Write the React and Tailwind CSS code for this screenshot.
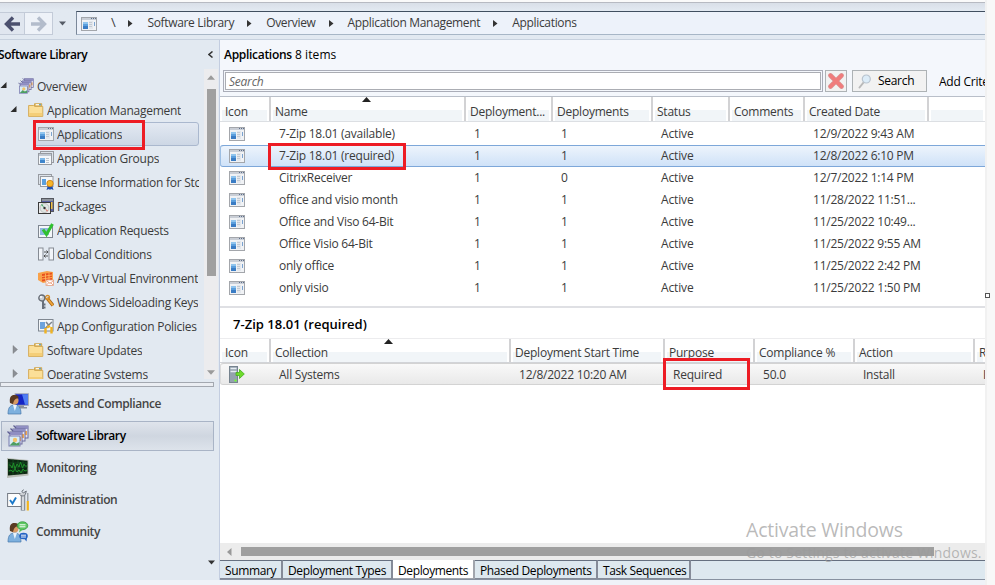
import React, { useState } from 'react';
import clsx from 'clsx';

// Window with the small content preview, used for every application entry
const AppIcon = ({ className }) => (
    <svg className={className} width="16" height="14" viewBox="0 0 16 14" shapeRendering="crispEdges">
        <rect x="0" y="0" width="16" height="14" fill="#a3a6ab" />
        <rect x="1" y="1" width="14" height="2" fill="#c9ced6" />
        <rect x="1" y="3" width="14" height="10" fill="#f0f2f5" />
        <rect x="10" y="1" width="1" height="1" fill="#5d6f8c" />
        <rect x="12" y="1" width="1" height="1" fill="#5d6f8c" />
        <rect x="14" y="1" width="1" height="1" fill="#5d6f8c" />
        <rect x="2" y="5" width="5" height="2" fill="#8fc4ee" />
        <rect x="2" y="7" width="5" height="2" fill="#5b9fdd" />
        <rect x="2" y="9" width="5" height="3" fill="#3a7cc4" />
        <rect x="8" y="4" width="4" height="8" fill="#e3e7ec" />
        <rect x="8" y="5" width="3" height="1" fill="#c3cad3" />
        <rect x="8" y="7" width="3" height="1" fill="#c3cad3" />
        <rect x="8" y="9" width="3" height="1" fill="#c3cad3" />
        <rect x="13" y="5" width="1" height="4" fill="#7ba3d0" />
    </svg>
);

const StackIcon = ({ size }) => (
    <svg width={size} height={size} viewBox="0 0 22 22">
        {[[9, 1], [6, 4], [3, 7]].map(([x, y]) => (
            <g key={x}>
                <rect x={x} y={y} width="12" height="12" fill="#e3e3f3" stroke="#6a6a9c" />
                <rect x={x} y={y} width="12" height="3" fill="#8f8ec2" />
                <path d={`M${x - 2.5} ${y - 0.5}l2.5 2.5`} stroke="#5d5d92" strokeWidth="1.2" />
                <rect x={x + 8} y={y + 5} width="3" height="4" fill="#f0a850" />
            </g>
        ))}
        <rect x="2" y="11" width="11" height="10" fill="#d7ecf7" stroke="#7a7ab0" />
        <path d="M2.5 20.5l4-4 3 2 3-1.5v3.5z" fill="#4d9e62" />
        <circle cx="8" cy="15" r="2.2" fill="#f2c36a" />
    </svg>
);

const FolderIcon = () => (
    <svg width="16" height="14" viewBox="0 0 16 14">
        <path d="M6.500 3V.7h7.200V3z" fill="#f3cf7c" stroke="#c59a3c" strokeWidth=".8" />
        <rect x="8" y="1.200" width="3" height="1" fill="#fff" />
        <rect x="11" y="1.200" width="2" height="1" fill="#3d9be0" />
        <path d="M.6 2.500h5l1 1h8.200v9.900H.6z" fill="#fbdf98" stroke="#d3a750" strokeWidth=".9" />
        <path d="M1.200 10h13v3h-13z" fill="#f4ce78" />
    </svg>
);

const GroupIcon = () => (
    <svg width="16" height="14" viewBox="0 0 16 14">
        <rect x="2.5" y=".5" width="13" height="11" fill="#dde3ea" stroke="#979ba1" />
        <rect x=".5" y="2.5" width="13" height="11" fill="#f4f7fa" stroke="#979ba1" />
        <rect x="1" y="3" width="12" height="2" fill="#c0c8d2" />
        <rect x="2" y="7" width="5" height="2" fill="#7db8ea" />
        <rect x="2" y="9" width="5" height="3" fill="#3f86cc" />
        <path d="M8 7.500h3M8 9.500h3M8 11.500h3" stroke="#bcc4ce" />
    </svg>
);

const LicenseIcon = () => (
    <svg width="16" height="16" viewBox="0 0 16 16">
        <rect x=".5" y=".5" width="13" height="10" fill="#dde3ea" stroke="#979ba1" />
        <rect x="2.500" y="2.500" width="12.500" height="10" fill="#f4f7fa" stroke="#979ba1" />
        <rect x="4" y="5" width="4" height="6" fill="#5b9fdd" />
        <path d="M10 11l-1.500 5 2.500-1 1 1 1-1 2.500 1-1.500-5z" fill="#1d4fb0" />
        <circle cx="12" cy="9.500" r="3.200" fill="#f6b52a" stroke="#c97b12" strokeWidth=".8" />
    </svg>
);

const PackageIcon = () => (
    <svg width="16" height="16" viewBox="0 0 16 16">
        <rect x="3.500" y=".5" width="12" height="13" fill="#5b62a5" stroke="#55585f" />
        <rect x="4" y="1" width="11" height="2" fill="#8f949c" />
        <rect x="13" y="4" width="1.500" height="7" fill="#f0c040" />
        <rect x="0" y="4" width="13" height="12" fill="#3a3a3a" />
        <rect x="1" y="5" width="11" height="10" fill="#ececec" />
        <circle cx="6.500" cy="10" r="4.500" fill="#dfe6e4" stroke="#999" strokeWidth=".5" />
        <path d="M6.500 10L3 7l1-1.300z" fill="#4caf6a" />
        <path d="M6.500 10l3.500 2.500-1 1.200z" fill="#e27b6c" />
        <circle cx="6.500" cy="10" r="1.200" fill="#333" />
    </svg>
);

const RequestIcon = () => (
    <svg width="16" height="15" viewBox="0 0 16 15">
        <rect x=".5" y="2.500" width="14" height="12" fill="#f4f7fa" stroke="#7f8791" />
        <rect x="2" y="5" width="9" height="7" fill="#8fb8de" />
        <path d="M5 6.500l3.500 5L14.500 1" fill="none" stroke="#2fc02f" strokeWidth="3" />
    </svg>
);

const ConditionIcon = () => (
    <svg width="16" height="14" viewBox="0 0 16 14">
        <rect x=".5" y="1" width="4.500" height="12" fill="#f2f5f9" stroke="#858b94" />
        <rect x="11" y="1" width="4.500" height="12" fill="#f2f5f9" stroke="#858b94" />
        <path d="M6 5h4M8.500 3.500L10 5 8.500 6.500M10 9H6M7.500 7.500L6 9l1.500 1.500" fill="none" stroke="#444" strokeWidth=".9" />
    </svg>
);

const AppVIcon = () => (
    <svg width="16" height="16" viewBox="0 0 16 16">
        <path d="M0 3l9-2 6 1v9l-10 2-5-3z" fill="#f9a24a" />
        <path d="M4 4l10-1.500V10L4 11.500z" fill="#e8501f" />
        <path d="M4 6.500L14 5M4 9l10-1.500M7.500 3.500V11M11 3v7.500" stroke="#ffb45c" strokeWidth=".9" />
        <rect x="8" y="10" width="7.500" height="5.500" fill="#fff" stroke="#e3a184" strokeWidth=".8" />
        <path d="M8.500 10.500l3.500 3 3.500-3M8.500 15l2.500-2.500M15 15l-2.500-2.500" fill="none" stroke="#e78257" strokeWidth=".7" />
    </svg>
);

const KeysIcon = () => (
    <svg width="16" height="16" viewBox="0 0 16 16">
        <path d="M9 4l6 7.500" stroke="#a35f12" strokeWidth="3.400" />
        <path d="M9 4l6 7.500" stroke="#f0a63a" strokeWidth="2" />
        <circle cx="9.500" cy="3.500" r="2" fill="none" stroke="#d58b25" strokeWidth="1.300" />
        <circle cx="3.800" cy="4" r="3" fill="#c9cfd6" stroke="#666c75" strokeWidth="1.300" />
        <circle cx="3" cy="3" r="1" fill="#fff" />
        <path d="M5 7v8M5.500 10.500h2M5.500 13.500h2" stroke="#69717c" strokeWidth="2" />
    </svg>
);

const PolicyIcon = () => (
    <svg width="16" height="16" viewBox="0 0 16 16">
        <rect x=".5" y="1.500" width="14.500" height="11.500" fill="#f4f7fa" stroke="#7f8791" />
        <rect x="2" y="4" width="5" height="7" fill="#6ea3dc" />
        <path d="M8 4l3 3.500M14 4l-6.500 6" stroke="#7d858f" strokeWidth="1.600" />
        <path d="M7.500 10v5.500M13.500 9v6.500M9 9.500l3-1.500" stroke="#f0b323" strokeWidth="2.400" />
    </svg>
);

const PersonShape = () => (
    <g>
        <path d="M1 21c0-7 2.500-9 6.500-9s6.500 2 6.500 9z" fill="#7db0de" stroke="#4779aa" strokeWidth=".7" />
        <path d="M6 12l1.800 6L10 12z" fill="#e9f3fc" />
        <circle cx="7.500" cy="7.500" r="4" fill="#d79a63" />
        <path d="M3 10c-1-7 2-8.500 5-8 2.500 0 4 1.500 3.500 3.500C9 5 7 6 6 11z" fill="#5a3a22" />
    </g>
);

const AssetsIcon = () => (
    <svg width="22" height="22" viewBox="0 0 22 22">
        <rect x="8" y=".8" width="13.500" height="11.500" fill="#1424c4" stroke="#a9adb5" />
        <path d="M15 1.300h6v10.500h-3z" fill="#4f7df2" />
        <path d="M12 12.500h5V14h3v1.500h-8z" fill="#8c929b" />
        <PersonShape />
    </svg>
);

const MonitoringIcon = () => (
    <svg width="22" height="20" viewBox="0 0 22 20">
        <path d="M0 0L21.500 2v15.500L0 20z" fill="#b9bdb6" />
        <path d="M1 1l19.500 1.800v13L1 17.500z" fill="#0c2611" />
        <path d="M1 5h19.500M1 9h19.500M1 13h19.500M6 1.500v15.500M11 2v14.500M16 2.500v13.500" stroke="#1b5a25" strokeWidth=".7" />
        <path d="M1.500 7h2l1.500 3 1.500-5 1.500 6L10 6l2 3 1.500-5 2 6 1.500-4 1 2h2M2 13l2-1 2 2 2-3 2 3 2-2 2 3 2-4 2 2 2-1" fill="none" stroke="#1f8f2a" strokeWidth="1" />
    </svg>
);

const AdminIcon = () => (
    <svg width="22" height="22" viewBox="0 0 22 22">
        <rect x=".6" y="4.500" width="14" height="13" fill="#fdfdfd" stroke="#747b85" />
        <path d="M3 11l2.500 3.500L9 8.500" fill="none" stroke="#1a78c9" strokeWidth="1.900" />
        <path d="M16 6v15.500" stroke="#6d747d" strokeWidth="4.400" />
        <path d="M16 6v15" stroke="#d6dade" strokeWidth="2.600" />
        <path d="M12.500 5.500c2 2 5 2 6-.5l.8-3-3 2-1.500-1.800 2-1.500" fill="#cfd3d8" stroke="#6d747d" />
        <path d="M20.800 4v8" stroke="#8c9199" strokeWidth="1.200" />
        <path d="M20.800 12v9.500" stroke="#f3b51d" strokeWidth="2.200" />
    </svg>
);

const CommunityIcon = () => (
    <svg width="22" height="22" viewBox="0 0 22 22">
        <PersonShape />
        <ellipse cx="15.500" cy="4.700" rx="5.300" ry="4" fill="#5cc762" stroke="#31913a" strokeWidth=".7" />
        <path d="M12.500 3.800h6M12.500 5.800h6" stroke="#fff" />
        <path d="M13 8l-1 3.500L16 8.500z" fill="#4fbf55" />
        <ellipse cx="16.500" cy="15" rx="4.300" ry="3.300" fill="#2563c4" />
        <path d="M14 14.200h5M14 16h5" stroke="#fff" strokeWidth=".9" />
        <path d="M17 17.500l2.500 3 .5-4z" fill="#2563c4" />
    </svg>
);

const ServerIcon = () => (
    <svg width="16" height="17" viewBox="0 0 16 17">
        <rect x=".5" y=".5" width="8" height="16" fill="#94a2ae" stroke="#76838e" />
        <path d="M1.500 2.500h6M1.500 5.500h6" stroke="#e6edf2" strokeWidth="1.300" />
        <rect x="5.500" y="13.500" width="2" height="2" fill="#6fff2a" />
        <path d="M7 6.500h3.500V3.500L15.300 8l-4.800 4.500v-3H7z" fill="#6edb2b" stroke="#43ad20" strokeWidth=".8" />
    </svg>
);

const Caret = ({ open }) => (
    <svg width="8" height="10" viewBox="0 0 8 10">
        {open ? <path d="M6.500 1v6h-6z" fill="#2b2b2b" /> : <path d="M3 .5l4.500 4-4.500 4z" fill="#8b8f96" stroke="#777" strokeWidth=".4" />}
    </svg>
);

const Triangle = ({ dir, className }) => (
    <svg className={className} width="9" height="5" viewBox="0 0 9 5">
        <path d={dir === 'up' ? 'M4.500 0L9 5H0z' : 'M0 0h9L4.500 5z'} fill="currentColor" />
    </svg>
);

const treeItems = [
    { label: 'Overview', icon: <StackIcon size={16} />, pad: 'pl-0', open: true },
    { label: 'Application Management', icon: <FolderIcon />, pad: 'pl-[10px]', open: true },
    { label: 'Applications', icon: <AppIcon />, pad: 'pl-5' },
    { label: 'Application Groups', icon: <GroupIcon />, pad: 'pl-5' },
    { label: 'License Information for Stc', icon: <LicenseIcon />, pad: 'pl-5' },
    { label: 'Packages', icon: <PackageIcon />, pad: 'pl-5' },
    { label: 'Application Requests', icon: <RequestIcon />, pad: 'pl-5' },
    { label: 'Global Conditions', icon: <ConditionIcon />, pad: 'pl-5' },
    { label: 'App-V Virtual Environment', icon: <AppVIcon />, pad: 'pl-5' },
    { label: 'Windows Sideloading Keys', icon: <KeysIcon />, pad: 'pl-5' },
    { label: 'App Configuration Policies', icon: <PolicyIcon />, pad: 'pl-5' },
    { label: 'Software Updates', icon: <FolderIcon />, pad: 'pl-[10px]', open: false },
    { label: 'Operating Systems', icon: <FolderIcon />, pad: 'pl-[10px]', open: false },
];

const workspaces = [
    { label: 'Assets and Compliance', icon: <AssetsIcon /> },
    { label: 'Software Library', icon: <StackIcon size={22} /> },
    { label: 'Monitoring', icon: <MonitoringIcon /> },
    { label: 'Administration', icon: <AdminIcon /> },
    { label: 'Community', icon: <CommunityIcon /> },
];

const applications = [
    ['7-Zip 18.01 (available)', '1', '1', '12/9/2022 9:43 AM'],
    ['7-Zip 18.01 (required)', '1', '1', '12/8/2022 6:10 PM'],
    ['CitrixReceiver', '1', '0', '12/7/2022 1:14 PM'],
    ['office and visio month', '1', '1', '11/28/2022 11:51...'],
    ['Office and Viso 64-Bit', '1', '1', '11/25/2022 10:49...'],
    ['Office Visio 64-Bit', '1', '1', '11/25/2022 9:55 AM'],
    ['only office', '1', '1', '11/25/2022 2:42 PM'],
    ['only visio', '1', '1', '11/25/2022 1:50 PM'],
];

const appGrid = 'grid grid-cols-[51px_195px_87px_100px_77px_75px_124px_56px]';
const deployGrid = 'grid grid-cols-[51px_240px_154px_90px_100px_120px_10px]';

const tabs = [
    ['Summary', 'w-[63px]'],
    ['Deployment Types', 'w-[110px]'],
    ['Deployments', 'w-[82px]'],
    ['Phased Deployments', 'w-[123px]'],
    ['Task Sequences', 'w-[93px]'],
];

const HeaderCell = ({ label, sorted, last }) => (
    <div className={clsx('relative overflow-hidden pl-1', !last && 'border-r-2 border-[#d2d2d4]')}>
        <div className="absolute inset-x-0.5 top-[13px] bottom-0 bg-[#f1f5f8]" />
        {sorted && <Triangle dir="up" className="absolute top-0 left-1/2 -ml-[6px] text-[#222]" />}
        <span className={clsx('relative whitespace-nowrap', label === 'Icon' && 'pl-px')}>{label}</span>
    </div>
);

const RedBox = ({ className }) => (
    <div className={clsx('pointer-events-none absolute border-3 border-[#ed1c24]', className)} />
);

const App = () => {
    const [workspace, setWorkspace] = useState('Software Library');
    const [selected, setSelected] = useState(1);
    const [tab, setTab] = useState('Deployments');

    return (
        <div className="relative flex h-[585px] w-[995px] overflow-hidden bg-[#f8f8f8] font-['Open_Sans','Noto_Sans',sans-serif] text-[12px] tracking-[-0.23px] text-[#3b3b3b]">
            <div className="flex w-[985px] flex-col bg-[#e2e9f1]">
                {/* Navigation bar */}
                <div className="h-[2px] bg-[#fafafa]" />
                <div className="flex h-[38px] shrink-0 items-start border-t border-b border-t-[#b7bac2] border-b-[#c7d1de] bg-linear-to-b from-[#d9dfe8] to-[#e2e9f1] to-20% pt-2">
                    <div className="mt-px flex h-[23px] w-[53px] border border-l-0 border-[#c3cbd8] bg-[#eef2f8]">
                        <button className="flex w-[25px] items-center justify-center border-r border-[#c3cbd8] bg-[#e0e6ef] pr-2">
                            <svg width="17" height="16" viewBox="0 0 17 16" className="ml-2 shrink-0">
                                <path d="M16 8H3M9 1.500L2.500 8 9 14.500" fill="none" stroke="#4b506e" strokeWidth="3.400" />
                            </svg>
                        </button>
                        <button className="flex flex-1 items-center justify-center">
                            <svg width="17" height="16" viewBox="0 0 17 16">
                                <path d="M1 8h13M8 1.500L14.500 8 8 14.500" fill="none" stroke="#b3bccb" strokeWidth="3.400" />
                            </svg>
                        </button>
                    </div>
                    <Triangle dir="down" className="mt-[10px] ml-[6px] w-[7px] text-[#555b66]" />
                    <div className="ml-[10px] flex h-6 flex-1 items-center border border-r-0 border-t-[#414f60] border-b-[#a7b6c6] border-l-[#7b8899] bg-[#edf2fa] pl-1 tracking-[-0.33px]">
                        <AppIcon className="mt-0.5" />
                        <span className="ml-[14px] text-[13px]">\</span>
                        {['Software Library', 'Overview', 'Application Management', 'Applications'].map((crumb) => (
                            <React.Fragment key={crumb}>
                                <svg width="5" height="7" viewBox="0 0 5 7" className="mr-[14px] ml-[13px] shrink-0">
                                    <path d="M0 0l4.500 3.500L0 7z" fill="#333" />
                                </svg>
                                <span className="whitespace-nowrap">{crumb}</span>
                            </React.Fragment>
                        ))}
                    </div>
                </div>

                <div className="flex min-h-0 flex-1">
                    {/* Left pane */}
                    <div className="flex w-[220px] flex-col border-r border-[#c3cde0]">
                        <div className="flex h-[29px] items-center justify-between pr-[6px] text-black">
                            <span className="-ml-[2px] pt-px font-semibold tracking-[-0.42px]">Software Library</span>
                            <svg width="5" height="7" viewBox="0 0 5 7">
                                <path d="M4.500 .5L1 3.500l3.500 3" fill="none" stroke="#333" strokeWidth="1.500" />
                            </svg>
                        </div>
                        <div className="flex h-[310px] shrink-0">
                            <div className="h-[310px] w-[199px] overflow-hidden pt-[5px] tracking-[-0.27px]">
                                {treeItems.map((item) => (
                                    <div key={item.label} className={clsx('flex h-6 items-center', item.pad)}>
                                        <span className="flex w-[18px] shrink-0">
                                            {item.open !== undefined && <Caret open={item.open} />}
                                        </span>
                                        <div
                                            className={clsx(
                                                'flex h-6 min-w-0 flex-1 items-center rounded-[3px]',
                                                item.label === 'Applications' && 'border border-[#aab8ce] bg-linear-to-b from-[#e3e9f2] to-[#cdd7e5] -ml-[5px] pl-1'
                                            )}
                                        >
                                            <span className="flex w-[19px] shrink-0">{item.icon}</span>
                                            <span className="overflow-hidden pt-[2px] whitespace-nowrap">{item.label}</span>
                                        </div>
                                    </div>
                                ))}
                            </div>
                            <div className="ml-[5px] flex w-[14px] flex-col items-center bg-[#ececee] pt-[6px] pb-[4px] text-[#9b9b9b]">
                                <Triangle dir="up" className="w-[8px]" />
                                <div className="mt-[9px] h-[187px] w-[9px] bg-[#a0a0a0]" />
                                <Triangle dir="down" className="mt-auto w-[8px]" />
                            </div>
                        </div>
                        <div className="mt-[3px] h-[5px] w-[214px] shrink-0 border border-[#a3a8b0] bg-[#eaedf2]" />
                        <div className="mt-px flex flex-col">
                            {workspaces.map(({ label, icon }) => (
                                <button
                                    key={label}
                                    onClick={() => setWorkspace(label)}
                                    className={clsx(
                                        'my-px ml-px flex h-[30px] w-[213px] items-center border pl-[5px] text-left text-[12px] font-semibold tracking-[-0.4px]',
                                        workspace === label
                                            ? 'border-[#a9b4c6] bg-linear-to-b from-[#dfe4ec] via-[#cfd6e0] to-[#dde3eb] text-black'
                                            : 'border-transparent text-[#444]'
                                    )}
                                >
                                    <span className="flex w-[29px] shrink-0">{icon}</span>
                                    <span>{label}</span>
                                </button>
                            ))}
                        </div>
                        <Triangle dir="down" className="mt-[12px] ml-[208px] w-[7px] text-[#333]" />
                    </div>

                    {/* Right pane */}
                    <div className="flex w-[765px] flex-col bg-white">
                        <div className="h-[56px] shrink-0 bg-[#f4f7fc] text-black">
                            <div className="h-[30px] pt-[6px] pl-1 leading-[18px] tracking-[0.08px]">
                                <span className="font-semibold tracking-[-0.3px]">Applications</span> 8 items
                            </div>
                            <div className="flex h-[22px] items-stretch pl-[3px]">
                                <div className="w-[600px] border border-[#aaadb8] bg-[#f4f7fc] p-px">
                                    <div className="flex h-full items-center border border-[#abadb3] bg-white pt-px pl-[3px] text-[#666] italic">Search</div>
                                </div>
                                <button className="ml-[2px] flex w-[22px] items-center justify-center border border-[#adb2b5] bg-[#f2f2f2]">
                                    <svg width="16" height="16" viewBox="0 0 16 16">
                                        <path d="M2.500 2.500l11 11M13.500 2.500l-11 11" stroke="#d99091" strokeWidth="4.600" strokeLinecap="round" />
                                        <path d="M2.500 2.500l11 11M13.500 2.500l-11 11" stroke="#f07c7c" strokeWidth="3.400" strokeLinecap="round" />
                                    </svg>
                                </button>
                                <button className="ml-[5px] flex w-[75px] items-center border border-[#adb2b5] bg-[#f2f2f2] pl-[5px]">
                                    <svg width="14" height="15" viewBox="0 0 14 15">
                                        <path d="M5.500 8.500l-4 5" stroke="#b9b9b9" strokeWidth="2" strokeLinecap="round" />
                                        <circle cx="8.300" cy="5" r="4" fill="#dcecf8" stroke="#b9c4cf" strokeWidth="1.200" />
                                    </svg>
                                    <span className="ml-[6px] tracking-[-0.3px]">Search</span>
                                </button>
                                <span className="ml-3 w-[46px] overflow-hidden whitespace-nowrap leading-[24px]">Add Criteria</span>
                            </div>
                        </div>

                        {/* Application list */}
                        <div className={clsx(appGrid, 'h-[26px] shrink-0 border-t border-b border-t-[#b9bfc9] border-b-[#dcdfe3] leading-[30px]')}>
                            {['Icon', 'Name', 'Deployment...', 'Deployments', 'Status', 'Comments', 'Created Date', ''].map((label, i) => (
                                <HeaderCell key={i} label={label} sorted={label === 'Name'} last={i === 7} />
                            ))}
                        </div>
                        <div className="h-[184px] shrink-0 pt-px">
                            {applications.map(([name, types, deployments, created], i) => (
                                <div
                                    key={name}
                                    onClick={() => setSelected(i)}
                                    className={clsx(
                                        appGrid,
                                        'h-[22px] items-center border-y',
                                        selected === i ? 'rounded-l-[3px] border-[#7da7d9] bg-linear-to-b from-[#edf4fc] to-[#cfe2f8] inset-shadow-[1px_0_0_#9dbfe4]' : 'border-transparent'
                                    )}
                                >
                                    <AppIcon className="ml-[9px]" />
                                    <span className="pl-2">{name}</span>
                                    <span className="pl-2">{types}</span>
                                    <span className="pl-2">{deployments}</span>
                                    <span className="pl-2 tracking-[-0.15px]">Active</span>
                                    <span />
                                    <span className="pl-2 whitespace-nowrap">{created}</span>
                                </div>
                            ))}
                        </div>

                        {/* Detail pane */}
                        <div className="h-[32px] shrink-0 border-t-2 border-[#dfe0e4] pt-[7px] pl-[13px] text-[13px] leading-[18px] font-semibold tracking-[0.02px] text-black">
                            {applications[selected][0]}
                        </div>
                        <div className={clsx(deployGrid, 'h-[25px] shrink-0 border-t border-b border-t-[#ececee] border-b-[#d2d4d8] leading-[28px]')}>
                            {['Icon', 'Collection', 'Deployment Start Time', 'Purpose', 'Compliance %', 'Action', 'R'].map((label, i) => (
                                <HeaderCell key={label} label={label} sorted={label === 'Collection'} last={i === 6} />
                            ))}
                        </div>
                        <div className={clsx(deployGrid, 'h-[22px] shrink-0 items-center rounded-l-[3px] border-y border-[#d3d3d3] bg-linear-to-b from-[#f9f9f9] to-[#e9e9e9] pt-px inset-shadow-[1px_0_0_#dcdcdc]')}>
                            <span className="-mt-px pl-[9px]"><ServerIcon /></span>
                            <span className="pl-2">All Systems</span>
                            <span className="pl-2">12/8/2022 10:20 AM</span>
                            <span className="pl-2">Required</span>
                            <span className="pl-2">50.0</span>
                            <span className="pl-2">Install</span>
                            <span className="overflow-hidden pl-2">I</span>
                        </div>

                        <div className="mt-auto flex h-[17px] shrink-0 items-center bg-[#ececec]">
                            <svg width="5" height="8" viewBox="0 0 5 8" className="ml-[7px]">
                                <path d="M4.500 0v8L0 4z" fill="#999" />
                            </svg>
                            <div className="ml-[9px] h-[9px] w-[693px] bg-[#9f9f9f]" />
                        </div>
                        <div className="flex h-[20px] shrink-0 border-b border-[#8791a0] bg-[#dde8ef] leading-[20px] tracking-[-0.38px] text-black">
                            {tabs.map(([label, width]) => (
                                <button
                                    key={label}
                                    onClick={() => setTab(label)}
                                    className={clsx(
                                        'flex items-start border-r-2 border-b pl-[5px] whitespace-nowrap',
                                        width,
                                        tab === label ? 'border-[#a1a5ad] bg-white pt-px' : 'border-t border-[#858b98] border-t-[#667080]'
                                    )}
                                >
                                    {label}
                                </button>
                            ))}
                            <div className="flex-1 border-t border-[#667080]" />
                        </div>
                    </div>
                </div>
                <div className="h-[5px] shrink-0 bg-[#eff2f8]" />
            </div>
            <div className="w-[10px] border-l-2 border-[#f1f1f1]" />

            {/* Highlights and desktop watermark lie over the window */}
            <RedBox className="top-[120px] left-[33px] h-[30px] w-[112px]" />
            <RedBox className="top-[143px] left-[268px] h-[27px] w-[138px]" />
            <RedBox className="top-[358px] left-[663px] h-[32px] w-[87px]" />
            <div className="absolute top-[293px] left-[985px] h-[5px] w-[5px] border border-[#555] bg-white" />
            <div className="pointer-events-none absolute top-[516px] left-[746px] whitespace-nowrap text-[#9b9b9b]/70">
                <div className="text-[19.5px] leading-[28px] tracking-[-0.2px]">Activate Windows</div>
                <div className="text-[14px] leading-[18px] tracking-[0.18px]">Go to Settings to activate Windows.</div>
            </div>
        </div>
    );
};

export default App;
